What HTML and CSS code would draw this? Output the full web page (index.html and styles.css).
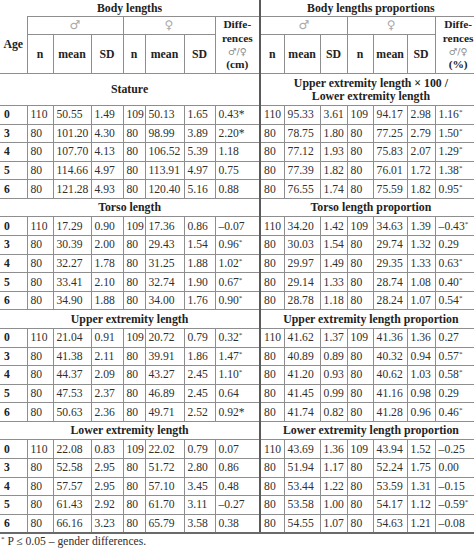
FILE: index.html
```html
<!DOCTYPE html>
<html>
<head>
<meta charset="utf-8">
<link rel="stylesheet" href="styles.css">
</head>
<body>
<div class="page">
<table class="tbl">
<colgroup>
<col class="c-age"><col class="c-n1"><col class="c-m1"><col class="c-s1"><col class="c-n2"><col class="c-m2"><col class="c-s2"><col class="c-d1">
<col class="c-n3"><col class="c-m3"><col class="c-s3"><col class="c-n4"><col class="c-m4"><col class="c-s4"><col class="c-d2">
</colgroup>
<thead>
<tr class="h1">
<th colspan="8" class="bl first">Body lengths</th>
<th colspan="7" class="dv">Body lengths proportions</th>
</tr>
<tr class="h2">
<th rowspan="2" class="age first">Age</th>
<th colspan="3" class="sym">♂</th>
<th colspan="3" class="sym">♀</th>
<th rowspan="2" class="diff">Diffe-<br>rences<br><span class="sy">♂/♀</span><br>(cm)</th>
<th colspan="3" class="sym dv">♂</th>
<th colspan="3" class="sym">♀</th>
<th rowspan="2" class="diff">Diffe-<br>rences<br><span class="sy">♂/♀</span><br>(%)</th>
</tr>
<tr class="h3">
<th>n</th><th>mean</th><th>SD</th><th>n</th><th>mean</th><th>SD</th>
<th class="dv">n</th><th>mean</th><th>SD</th><th>n</th><th>mean</th><th>SD</th>
</tr>
</thead>
<tbody>
<tr class="sec sec-tall"><th colspan="8" class="first">Stature</th><th colspan="7" class="dv two">Upper extremity length × 100 /<br>Lower extremity length</th></tr>
<tr><td class="a first">0</td><td>110</td><td>50.55</td><td>1.49</td><td>109</td><td>50.13</td><td>1.65</td><td>0.43*</td><td class="dv">110</td><td>95.33</td><td>3.61</td><td>109</td><td>94.17</td><td>2.98</td><td>1.16<sup>*</sup></td></tr>
<tr><td class="a first">3</td><td>80</td><td>101.20</td><td>4.30</td><td>80</td><td>98.99</td><td>3.89</td><td>2.20*</td><td class="dv">80</td><td>78.75</td><td>1.80</td><td>80</td><td>77.25</td><td>2.79</td><td>1.50<sup>*</sup></td></tr>
<tr><td class="a first">4</td><td>80</td><td>107.70</td><td>4.13</td><td>80</td><td>106.52</td><td>5.39</td><td>1.18</td><td class="dv">80</td><td>77.12</td><td>1.93</td><td>80</td><td>75.83</td><td>2.07</td><td>1.29<sup>*</sup></td></tr>
<tr><td class="a first">5</td><td>80</td><td>114.66</td><td>4.97</td><td>80</td><td>113.91</td><td>4.97</td><td>0.75</td><td class="dv">80</td><td>77.39</td><td>1.82</td><td>80</td><td>76.01</td><td>1.72</td><td>1.38<sup>*</sup></td></tr>
<tr><td class="a first">6</td><td>80</td><td>121.28</td><td>4.93</td><td>80</td><td>120.40</td><td>5.16</td><td>0.88</td><td class="dv">80</td><td>76.55</td><td>1.74</td><td>80</td><td>75.59</td><td>1.82</td><td>0.95<sup>*</sup></td></tr>

<tr class="sec"><th colspan="8" class="first">Torso length</th><th colspan="7" class="dv">Torso length proportion</th></tr>
<tr><td class="a first">0</td><td>110</td><td>17.29</td><td>0.90</td><td>109</td><td>17.36</td><td>0.86</td><td>–0.07</td><td class="dv">110</td><td>34.20</td><td>1.42</td><td>109</td><td>34.63</td><td>1.39</td><td>–0.43<sup>*</sup></td></tr>
<tr><td class="a first">3</td><td>80</td><td>30.39</td><td>2.00</td><td>80</td><td>29.43</td><td>1.54</td><td>0.96<sup>*</sup></td><td class="dv">80</td><td>30.03</td><td>1.54</td><td>80</td><td>29.74</td><td>1.32</td><td>0.29</td></tr>
<tr><td class="a first">4</td><td>80</td><td>32.27</td><td>1.78</td><td>80</td><td>31.25</td><td>1.88</td><td>1.02<sup>*</sup></td><td class="dv">80</td><td>29.97</td><td>1.49</td><td>80</td><td>29.35</td><td>1.33</td><td>0.63<sup>*</sup></td></tr>
<tr><td class="a first">5</td><td>80</td><td>33.41</td><td>2.10</td><td>80</td><td>32.74</td><td>1.90</td><td>0.67<sup>*</sup></td><td class="dv">80</td><td>29.14</td><td>1.33</td><td>80</td><td>28.74</td><td>1.08</td><td>0.40<sup>*</sup></td></tr>
<tr><td class="a first">6</td><td>80</td><td>34.90</td><td>1.88</td><td>80</td><td>34.00</td><td>1.76</td><td>0.90<sup>*</sup></td><td class="dv">80</td><td>28.78</td><td>1.18</td><td>80</td><td>28.24</td><td>1.07</td><td>0.54<sup>*</sup></td></tr>

<tr class="sec"><th colspan="8" class="first">Upper extremity length</th><th colspan="7" class="dv">Upper extremity length proportion</th></tr>
<tr><td class="a first">0</td><td>110</td><td>21.04</td><td>0.91</td><td>109</td><td>20.72</td><td>0.79</td><td>0.32<sup>*</sup></td><td class="dv">110</td><td>41.62</td><td>1.37</td><td>109</td><td>41.36</td><td>1.36</td><td>0.27</td></tr>
<tr><td class="a first">3</td><td>80</td><td>41.38</td><td>2.11</td><td>80</td><td>39.91</td><td>1.86</td><td>1.47<sup>*</sup></td><td class="dv">80</td><td>40.89</td><td>0.89</td><td>80</td><td>40.32</td><td>0.94</td><td>0.57<sup>*</sup></td></tr>
<tr><td class="a first">4</td><td>80</td><td>44.37</td><td>2.09</td><td>80</td><td>43.27</td><td>2.45</td><td>1.10<sup>*</sup></td><td class="dv">80</td><td>41.20</td><td>0.93</td><td>80</td><td>40.62</td><td>1.03</td><td>0.58<sup>*</sup></td></tr>
<tr><td class="a first">5</td><td>80</td><td>47.53</td><td>2.37</td><td>80</td><td>46.89</td><td>2.45</td><td>0.64</td><td class="dv">80</td><td>41.45</td><td>0.99</td><td>80</td><td>41.16</td><td>0.98</td><td>0.29</td></tr>
<tr><td class="a first">6</td><td>80</td><td>50.63</td><td>2.36</td><td>80</td><td>49.71</td><td>2.52</td><td>0.92*</td><td class="dv">80</td><td>41.74</td><td>0.82</td><td>80</td><td>41.28</td><td>0.96</td><td>0.46<sup>*</sup></td></tr>

<tr class="sec"><th colspan="8" class="first">Lower extremity length</th><th colspan="7" class="dv">Lower extremity length proportion</th></tr>
<tr><td class="a first">0</td><td>110</td><td>22.08</td><td>0.83</td><td>109</td><td>22.02</td><td>0.79</td><td>0.07</td><td class="dv">110</td><td>43.69</td><td>1.36</td><td>109</td><td>43.94</td><td>1.52</td><td>–0.25</td></tr>
<tr><td class="a first">3</td><td>80</td><td>52.58</td><td>2.95</td><td>80</td><td>51.72</td><td>2.80</td><td>0.86</td><td class="dv">80</td><td>51.94</td><td>1.17</td><td>80</td><td>52.24</td><td>1.75</td><td>0.00</td></tr>
<tr><td class="a first">4</td><td>80</td><td>57.57</td><td>2.95</td><td>80</td><td>57.10</td><td>3.45</td><td>0.48</td><td class="dv">80</td><td>53.44</td><td>1.22</td><td>80</td><td>53.59</td><td>1.31</td><td>–0.15</td></tr>
<tr><td class="a first">5</td><td>80</td><td>61.43</td><td>2.92</td><td>80</td><td>61.70</td><td>3.11</td><td>–0.27</td><td class="dv">80</td><td>53.58</td><td>1.00</td><td>80</td><td>54.17</td><td>1.12</td><td>–0.59<sup>*</sup></td></tr>
<tr class="last"><td class="a first">6</td><td>80</td><td>66.16</td><td>3.23</td><td>80</td><td>65.79</td><td>3.58</td><td>0.38</td><td class="dv">80</td><td>54.55</td><td>1.07</td><td>80</td><td>54.63</td><td>1.21</td><td>–0.08</td></tr>
</tbody>
</table>
<p class="note"><sup>*</sup> P ≤ 0.05 – gender differences.</p>
</div>
</body>
</html>
```

FILE: styles.css
```css
html, body {
  margin: 0;
  padding: 0;
  background: #ffffff;
}
body {
  overflow: hidden;
  font-family: "Liberation Serif", "DejaVu Serif", serif;
  color: #2f2f2f;
}
.page {
  width: 481px;
}
.tbl {
  border-collapse: collapse;
  table-layout: fixed;
  width: 481px;
  font-size: 11.6px;
}
.c-age { width: 27px; }
.c-n1 { width: 26px; }
.c-m1 { width: 38px; }
.c-s1 { width: 32px; }
.c-n2 { width: 22px; }
.c-m2 { width: 39px; }
.c-s2 { width: 31px; }
.c-d1 { width: 45px; }
.c-n3 { width: 24px; }
.c-m3 { width: 36px; }
.c-s3 { width: 27px; }
.c-n4 { width: 26px; }
.c-m4 { width: 34px; }
.c-s4 { width: 28px; }
.c-d2 { width: 46px; }

.tbl th, .tbl td {
  border: 1px solid #8e8e8e;
  padding: 0 0 0 3px;
  vertical-align: middle;
  white-space: nowrap;
  overflow: visible;
  line-height: 13px;
}
.tbl th {
  font-weight: bold;
  color: #222222;
  text-align: center;
  padding: 0;
  font-size: 11.8px;
}
.tbl td {
  text-align: left;
  height: 17.6px;
}
.h1 th {
  border-top: none;
  height: 16px;
}
.h1 .bl {
  border-bottom: none;
}
.h2 th {
  height: 17px;
}
.h2 .age {
  border-top: none;
}
.h3 th {
  height: 38px;
}
.sym {
  font-weight: normal !important;
  color: #a8a8a8 !important;
  font-family: "DejaVu Sans", sans-serif;
  font-size: 12px !important;
}
.tbl th.diff {
  font-size: 11.4px;
  line-height: 13.4px;
  padding: 0;
}
.sy {
  font-weight: normal;
  color: #8a8a8a;
  font-family: "DejaVu Sans", sans-serif;
  font-size: 9.5px;
}
.sec th {
  height: 17.5px;
}
.sec-tall th {
  height: 31px;
}
.two {
  line-height: 13px !important;
}
.first {
  border-left: none !important;
}
.dv {
  border-left: 2px solid #5a5a5a !important;
}
td.a {
  font-weight: bold;
  color: #222222;
  padding-left: 4px;
}
.last td {
  border-bottom: 2px solid #6a6a6a;
}
sup {
  font-size: 7px;
  vertical-align: 4px;
  line-height: 0;
}
.note {
  margin: 0;
  padding: 1px 0 0 1px;
  font-size: 11.6px;
  line-height: 13px;
  color: #2f2f2f;
}
```
